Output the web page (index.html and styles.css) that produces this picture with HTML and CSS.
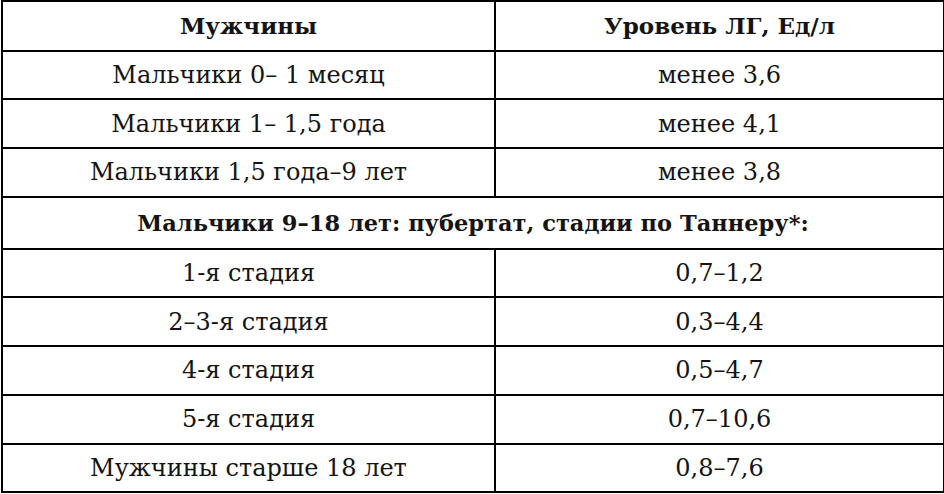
FILE: index.html
```html
<!DOCTYPE html>
<html lang="ru">
<head>
<meta charset="utf-8">
<link rel="stylesheet" href="styles.css">
</head>
<body>
<table class="lh">
  <colgroup><col class="c1"><col class="c2"></colgroup>
  <tr class="head"><th>Мужчины</th><th>Уровень ЛГ, Ед/л</th></tr>
  <tr><td>Мальчики 0– 1 месяц</td><td>менее 3,6</td></tr>
  <tr><td>Мальчики 1– 1,5 года</td><td>менее 4,1</td></tr>
  <tr><td>Мальчики 1,5 года–9 лет</td><td>менее 3,8</td></tr>
  <tr class="section"><th colspan="2">Мальчики 9–18 лет: пубертат, стадии по Таннеру*:</th></tr>
  <tr><td>1-я стадия</td><td>0,7–1,2</td></tr>
  <tr><td>2–3-я стадия</td><td>0,3–4,4</td></tr>
  <tr><td>4-я стадия</td><td>0,5–4,7</td></tr>
  <tr><td>5-я стадия</td><td>0,7–10,6</td></tr>
  <tr><td>Мужчины старше 18 лет</td><td>0,8–7,6</td></tr>
</table>
</body>
</html>
```
FILE: styles.css
```css
html, body {
  margin: 0;
  padding: 0;
  background: #ffffff;
}
.lh {
  border-collapse: collapse;
  width: 942px;
  margin-left: 1px;
  font-family: "DejaVu Serif", serif;
  font-size: 24px;
  color: #141414;
  table-layout: fixed;
}
.lh .c1 {
  width: 493px;
}
.lh .c2 {
  width: 449px;
}
.lh td, .lh th {
  border: 2.5px solid #000;
  text-align: center;
  vertical-align: middle;
  padding: 0;
  height: 46.7px;
}
.lh th {
  font-weight: bold;
  font-size: 23px;
}
.lh .head th {
  height: 47.7px;
}
.lh .section th {
  height: 50px;
  font-size: 22.5px;
}
```
